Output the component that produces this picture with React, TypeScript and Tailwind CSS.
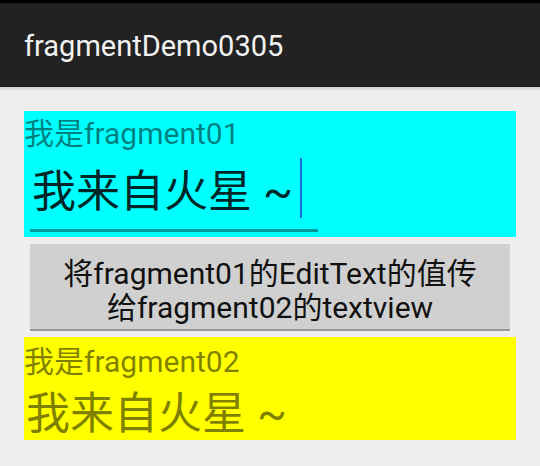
import React from "react";

export default function App() {
  const font = { fontFamily: "Roboto, 'Noto Sans CJK SC', sans-serif" };
  return (
    <div
      className="w-[540px] h-[466px] bg-[#eeeeee] overflow-hidden flex flex-col"
      style={font}
    >
      <div className="h-[3px] bg-black shrink-0" />
      <div className="h-[84px] bg-[#222222] shrink-0 flex items-center pl-[24px] pt-[2px]">
        <span className="text-[29px] leading-none text-[#f2f2f2]">fragmentDemo0305</span>
      </div>
      <div className="h-[4px] shrink-0 bg-linear-to-b from-[#cfcfcf] to-[#eeeeee]" />

      <div className="flex flex-col px-[24px] pt-[20px]">
        {/* fragment01 */}
        <div className="h-[126px] bg-[#00ffff] flex flex-col">
          <div className="pt-[3px] h-[43px] leading-[40px] text-[30px] text-black/50 whitespace-nowrap">
            我是fragment01
          </div>
          <div className="ml-[6px] w-[288px] mt-[4px] flex items-start">
            <span className="pl-[2px] pt-[4px] text-[44px] leading-[60px] text-black/[0.87] whitespace-nowrap">
              我来自火星 ~
            </span>
            <span className="ml-[7px] w-[2px] h-[60px] bg-[#1a6fe0]" />
          </div>
          <div className="ml-[6px] w-[288px] h-[3px] bg-[#009a9a] mt-[7px]" />
        </div>

        {/* button */}
        <div className="mt-[7px] mx-[6px] h-[87px] bg-[#d0d0d0] border-b-2 border-[#9a9a9a] flex items-center justify-center pt-[8px]">
          <div className="text-center text-[30px] leading-[34px] text-[#111111] whitespace-nowrap">
            将fragment01的EditText的值传
            <br />
            给fragment02的textview
          </div>
        </div>

        {/* fragment02 */}
        <div className="mt-[6px] h-[103px] bg-[#ffff00] flex flex-col overflow-hidden">
          <div className="pt-[5px] h-[45px] leading-[40px] text-[30px] text-black/50 whitespace-nowrap">
            我是fragment02
          </div>
          <div className="pt-[6px] pl-[2px] text-[44px] leading-[52px] text-black/50 whitespace-nowrap">
            我来自火星 ~
          </div>
        </div>
      </div>
    </div>
  );
}
